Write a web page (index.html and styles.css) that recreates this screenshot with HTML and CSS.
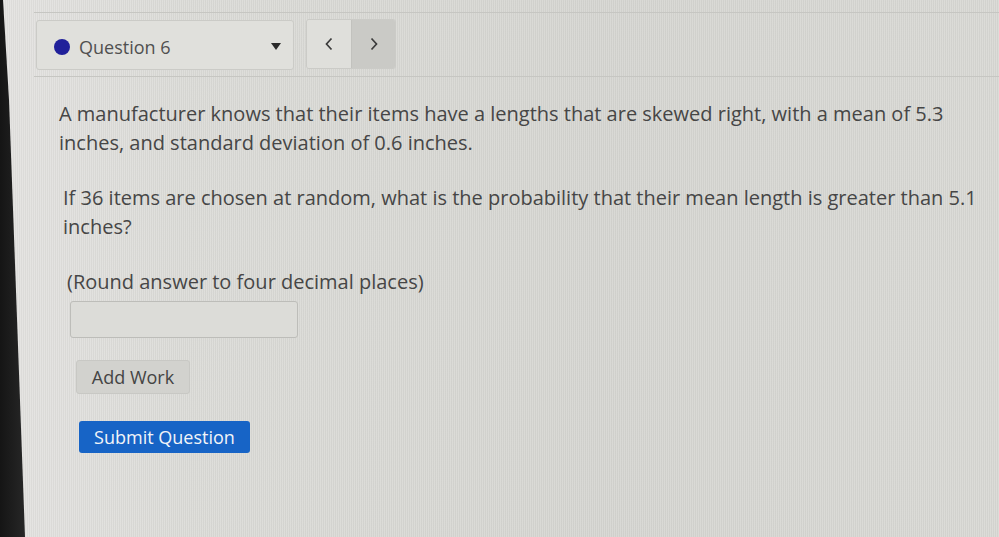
FILE: index.html
```html
<!DOCTYPE html>
<html lang="en">
<head>
    <meta charset="UTF-8">
    <meta name="viewport" content="width=device-width, initial-scale=1.0">
    <title>Question 6</title>
    <link rel="stylesheet" href="styles.css">
</head>
<body>
    <div class="bezel"></div>
    <div class="page">
        <div class="toolbar">
            <div class="qselect">
                <span class="dot"></span>
                <span class="qlabel">Question 6</span>
                <span class="caret"></span>
            </div>
            <div class="nav">
                <button class="nav-btn" aria-label="Previous">
                    <svg width="10" height="14" viewBox="0 0 10 14"><polyline points="7.5,1.5 2.5,7 7.5,12.5" fill="none" stroke="#3c3c3c" stroke-width="1.7"/></svg>
                </button>
                <button class="nav-btn next" aria-label="Next">
                    <svg width="10" height="14" viewBox="0 0 10 14"><polyline points="2.5,1.5 7.5,7 2.5,12.5" fill="none" stroke="#3c3c3c" stroke-width="1.7"/></svg>
                </button>
            </div>
        </div>

        <div class="question">
            <p class="q1">A manufacturer knows that their items have a lengths that are skewed right, with a mean of 5.3 inches, and standard deviation of 0.6 inches.</p>
            <p class="q2">If 36 items are chosen at random, what is the probability that their mean length is greater than 5.1 inches?</p>
            <p class="q3">(Round answer to four decimal places)</p>
            <input type="text" class="answer" aria-label="Answer">
            <div>
                <button class="btn add-work">Add Work</button>
            </div>
            <div>
                <button class="btn submit">Submit Question</button>
            </div>
        </div>
    </div>
</body>
</html>
```

FILE: styles.css
```css
body {
    margin: 0;
    height: 537px;
    overflow: hidden;
    font-family: "Open Sans", "Noto Sans", sans-serif;
    color: #464646;
    background-color: #d9d9d5;
    background-image:
        repeating-linear-gradient(90deg, rgba(255,255,255,0.08) 0 1px, rgba(0,0,0,0.03) 1px 2px),
        linear-gradient(90deg, #e4e3e1 0, #dcdcd8 180px, #d6d6d2 600px, #d9d9d5 100%);
}

/* dark monitor edge on the left */
.bezel {
    position: fixed;
    left: 0;
    top: 0;
    width: 30px;
    height: 537px;
    background: linear-gradient(90deg, #151515, #2a2a2a);
    clip-path: polygon(0 0, 3px 0, 9px 100px, 25px 537px, 0 537px);
}

.page {
    padding: 12px 0 0 34px;
}

.toolbar {
    display: flex;
    align-items: flex-start;
    gap: 12px;
    padding: 7px 0 6px 2px;
    border-top: 1px solid #c6c6c2;
    border-bottom: 1px solid #c6c6c2;
}

.qselect {
    width: 239px;
    height: 45px;
    padding: 3px 0 0 17px;
    display: flex;
    align-items: center;
    border: 1px solid #cbcbc7;
    border-radius: 3px;
    background-color: #e0e0dc;
}

.dot {
    width: 16px;
    height: 16px;
    border-radius: 50%;
    background-color: #20209a;
}

.qlabel {
    margin-left: 9px;
    font-size: 18px;
    color: #505050;
}

.caret {
    margin-left: auto;
    margin-right: 12px;
    width: 0;
    height: 0;
    border-left: 5px solid transparent;
    border-right: 5px solid transparent;
    border-top: 7px solid #2a2a2a;
}

.nav {
    display: flex;
    margin-top: -1px;
    border: 1px solid #cbcbc7;
    border-radius: 3px;
    overflow: hidden;
}

.nav-btn {
    width: 44px;
    height: 48px;
    border: none;
    padding: 0;
    display: flex;
    align-items: center;
    justify-content: center;
    background-color: #dfdfdb;
}

.nav-btn.next {
    background-color: #cacac6;
    border-left: 1px solid #c2c2be;
}

.question {
    padding-left: 25px;
}

.question p {
    margin: 0;
    font-size: 20px;
    line-height: 29px;
    width: 930px;
}

.q1 {
    margin-top: 22px !important;
}

.q2 {
    margin-top: 26px !important;
    padding-left: 4px;
}

.q3 {
    margin-top: 26px !important;
    padding-left: 8px;
}

.answer {
    display: block;
    box-sizing: border-box;
    margin: 5px 0 0 11px;
    width: 228px;
    height: 37px;
    border: 1px solid #bdbdb9;
    border-radius: 3px;
    background-color: #dcdcd8;
}

.btn {
    font-family: "Open Sans", sans-serif;
    font-size: 18px;
    border-radius: 3px;
    cursor: pointer;
}

.add-work {
    margin: 22px 0 0 17px;
    width: 114px;
    height: 34px;
    padding: 0;
    border: 1px solid #c8c8c4;
    background-color: #d2d2ce;
    color: #444;
}

.submit {
    margin: 27px 0 0 20px;
    width: 171px;
    height: 32px;
    padding: 0;
    border: none;
    background-color: #1764c6;
    color: #f2f4f8;
}
```
